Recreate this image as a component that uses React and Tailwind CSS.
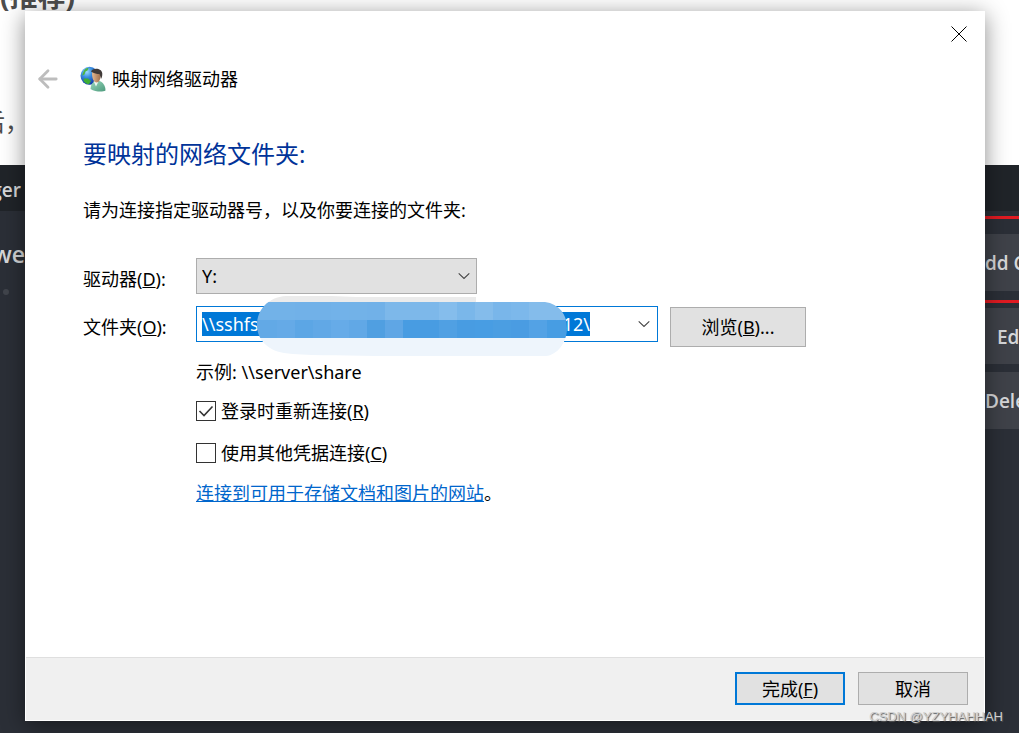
import { useState } from "react";
import { ArrowLeft } from "lucide-react";

const topCells = ["#72b2e8", "#72b2e8", "#71b1e8", "#71b1e8", "#72b2e9", "#72b2e8", "#71b1e8", "#7db8ea", "#7db8ea", "#7db8ea", "#85bdec", "#7ab7ea", "#84bceb", "#79b6ea", "#7cb8eb", "#84bceb", "#84bceb", "#79b6ea"];
const bottomCells = ["#62a9e6", "#65aae7", "#5ca6e5", "#61a8e6", "#66abe8", "#61a8e6", "#509fe1", "#5fa6e5", "#489ce2", "#489ce2", "#50a0e3", "#489ce2", "#489de3", "#4b9ee2", "#4a9ce2", "#53a2e5", "#479de3", "#479de3"];

function Chevron() {
  return (
    <svg
      viewBox="0 0 12 7"
      className="pointer-events-none absolute right-[7px] top-1/2 h-[7px] w-3 -translate-y-1/2"
      fill="none"
      stroke="#444"
      strokeWidth="1.1"
    >
      <path d="M0.7 0.8 6 6 11.3 0.8" />
    </svg>
  );
}

function NetworkUserIcon() {
  return (
    <svg viewBox="0 0 26 26" className="h-[26px] w-[26px]">
      <defs>
        <radialGradient id="globe" cx="35%" cy="28%" r="75%">
          <stop offset="0" stopColor="#9fdcff" />
          <stop offset="0.4" stopColor="#3a8fe0" />
          <stop offset="1" stopColor="#0b2fa0" />
        </radialGradient>
        <linearGradient id="coat" x1="0" y1="0" x2="1" y2="1">
          <stop offset="0" stopColor="#9ad8bd" />
          <stop offset="1" stopColor="#4c9a7c" />
        </linearGradient>
        <linearGradient id="face" x1="0" y1="0" x2="1" y2="0">
          <stop offset="0" stopColor="#e3b891" />
          <stop offset="1" stopColor="#a06f4c" />
        </linearGradient>
      </defs>
      <circle cx="9.5" cy="9.8" r="9" fill="url(#globe)" />
      <path d="M4 4.5C5.500 2.500 7 2 8.500 2l-1 2.500-2 1-1 3L2 9.500z" fill="#4fb53f" />
      <path d="M4 12.500l4 0 3 2.500L9 18.300c-2.500-.3-4-1.500-5.500-3.300z" fill="#3fae35" />
      <path d="M10.500 23c.2-4.500 2-7 5-8h4c3.500 1 6 5 6 9.500-3 1.800-10 1.500-15-1.500z" fill="url(#coat)" />
      <path d="M13.500 15l2.500 5.500 2.500-5z" fill="#eef8f4" />
      <path d="M12 7c0-3 8.300-3 8.500 1 .2 4.500-1 8.500-3.800 8.500-3.200 0-4.700-4.500-4.700-9.500z" fill="url(#face)" />
      <path d="M11 5.500c1-4 11-4.200 11.300 2 .1 2.500-.5 4.500-1.300 5.500-.5-2-.8-3.500-1.500-5-2.500 0-5.500-.3-8.500-2.500z" fill="#403a38" />
    </svg>
  );
}

function Mosaic() {
  return (
    <svg
      viewBox="0 0 312 60"
      className="pointer-events-none absolute -top-[11px] left-[59px] h-[60px] w-[312px]"
      aria-hidden="true"
    >
      <defs>
        <clipPath id="brush">
          <path d="M30 0C50 -2 70 0 100 1L220 1 220 6 289 6C303 8 311 18 311 32 311 47 301 59 290 60L120 60C80 59 50 60 28 57 10 54 1 42 1 29 1 14 12 1 30 0Z" />
        </clipPath>
      </defs>
      <g clipPath="url(#brush)">
        <rect width="220" height="6" fill="#ebebeb" />
        {topCells.map((c, i) => (
          <rect key={i} x={3 + i * 18 - (i ? 0 : 3)} y="6" width={i ? 18 : 21} height="18" fill={c} shapeRendering="crispEdges" />
        ))}
        {bottomCells.map((c, i) => (
          <rect key={i} x={3 + i * 18 - (i ? 0 : 3)} y="24" width={i ? 18 : 21} height="18" fill={c} shapeRendering="crispEdges" />
        ))}
        <rect y="42" width="312" height="18" fill="#eef5fc" />
      </g>
    </svg>
  );
}

function Check({ id, checked, onChange, children }) {
  return (
    <div className="flex h-6 items-center gap-[5px]">
      <span className="relative h-5 w-5">
        <input
          id={id}
          type="checkbox"
          checked={checked}
          onChange={(e) => onChange(e.target.checked)}
          className="block h-5 w-5 appearance-none border border-[#333] bg-white"
        />
        {checked && (
          <svg viewBox="0 0 20 20" className="pointer-events-none absolute inset-0" fill="none" stroke="#333" strokeWidth="1.6">
            <path d="M3.500 10 8 14.500 16.500 5.500" />
          </svg>
        )}
      </span>
      <label htmlFor={id}>{children}</label>
    </div>
  );
}

function Backdrop() {
  return (
    <div className="flex min-h-screen flex-col">
      <div className="h-[165px] overflow-hidden bg-white text-[#4d4d4d]">
        <p className="-mt-[22px] h-9 text-[28px] font-bold leading-9">(推荐)</p>
        <div className="mt-[90px] flex w-[29px] justify-end whitespace-nowrap text-[24px] leading-9">后，</div>
      </div>
      <div className="flex flex-1 justify-between bg-[#2b2f37] font-['Open_Sans',sans-serif] font-semibold text-[#d6d7d9]">
        <div className="w-[25px] overflow-hidden">
          <div className="flex h-[46px] items-center justify-end bg-[#202429] pr-1 pt-1 text-[19px]">ger</div>
          <div className="flex h-[86px] items-center justify-end text-[23px]">we</div>
          <div className="-mt-2 ml-[3px] h-1.5 w-1.5 rounded-full bg-[#41454c]" />
        </div>
        <div className="w-[34px] overflow-hidden whitespace-nowrap text-[19px]">
          <div className="h-[46px] bg-[#202429]" />
          <div className="mt-[5px] h-[3px] bg-[#e11b22]" />
          <div className="mt-[15px] flex h-[57px] items-center bg-[#3f4249] pt-0.5">dd C</div>
          <div className="mt-[9px] h-[3px] bg-[#e11b22]" />
          <div className="mt-[5px] flex h-[56px] items-center bg-[#3f4249] pl-3 pt-0.5">Ed</div>
          <div className="mt-2 flex h-[57px] items-center bg-[#3f4249] pt-0.5">Dele</div>
        </div>
      </div>
    </div>
  );
}

export default function App() {
  const [drive, setDrive] = useState("Y:");
  const [folder, setFolder] = useState("\\\\sshfs");
  const [reconnect, setReconnect] = useState(true);
  const [otherCreds, setOtherCreds] = useState(false);

  return (
    <div className="relative min-h-screen overflow-hidden font-['Noto_Sans','Noto_Sans_CJK_SC',sans-serif]">
      <Backdrop />

      <div className="absolute inset-0 flex pb-3 pl-[25px] pr-[34px] pt-[11px]">
        <main className="flex flex-1 flex-col border border-white bg-white text-[18px] leading-6 text-black shadow-[0_4px_22px_rgba(0,0,0,0.45)]">
          <div className="flex h-11 justify-end">
            <button type="button" aria-label="关闭" className="flex w-[50px] items-center justify-center">
              <svg viewBox="0 0 16 16" className="h-4 w-4" stroke="#000" strokeWidth="1">
                <path d="M0.500 0.500 15.500 15.500M15.500 0.500 0.500 15.500" />
              </svg>
            </button>
          </div>

          <div className="flex h-[46px] items-center pl-2">
            <button type="button" aria-label="返回" className="text-[#bdbdbd]">
              <ArrowLeft size={28} strokeWidth={2.4} />
            </button>
            <span className="ml-[18px]">
              <NetworkUserIcon />
            </span>
            <span className="ml-[6px]">映射网络驱动器</span>
          </div>

          <div className="flex-1 px-[57px]">
            <h1 className="mt-[34px] text-[24px] leading-9 text-[#003399]">要映射的网络文件夹:</h1>
            <p className="mt-[26px]">请为连接指定驱动器号，以及你要连接的文件夹:</p>

            <div className="mt-9 grid grid-cols-[113px_1fr]">
              <label htmlFor="drive" className="mt-[9px]">
                驱动器(<u>D</u>):
              </label>
              <div className="relative h-9 w-[281px]">
                <select
                  id="drive"
                  value={drive}
                  onChange={(e) => setDrive(e.target.value)}
                  className="h-full w-full appearance-none border border-[#adadad] bg-[#e1e1e1] px-[5px]"
                >
                  <option>Y:</option>
                </select>
                <Chevron />
              </div>

              <label htmlFor="folder" className="mt-[21px]">
                文件夹(<u>O</u>):
              </label>
              <div className="mt-3 flex items-start gap-3">
                <div className="relative flex h-9 w-[462px] items-center border border-[#0078d7] bg-white pl-[5px]">
                  <div className="flex h-6 w-[388px] items-center bg-[#0078d7] text-white">
                    <input
                      id="folder"
                      value={folder}
                      onChange={(e) => setFolder(e.target.value)}
                      className="h-6 min-w-0 flex-1 bg-transparent outline-none"
                    />
                    <span>12\</span>
                  </div>
                  <Mosaic />
                  <Chevron />
                </div>
                <button type="button" className="mt-px h-10 w-[136px] border border-[#adadad] bg-[#e1e1e1]">
                  浏览(<u>B</u>)...
                </button>
              </div>

              <div className="col-start-2">
                <p className="mt-[13px]">示例: \\server\share</p>
                <div className="mt-[15px]">
                  <Check id="reconnect" checked={reconnect} onChange={setReconnect}>
                    登录时重新连接(<u>R</u>)
                  </Check>
                </div>
                <div className="mt-[18px]">
                  <Check id="creds" checked={otherCreds} onChange={setOtherCreds}>
                    使用其他凭据连接(<u>C</u>)
                  </Check>
                </div>
                <p className="mt-4">
                  <a href="#" className="text-[#0066cc] underline">
                    连接到可用于存储文档和图片的网站
                  </a>
                  。
                </p>
              </div>
            </div>
          </div>

          <footer className="flex h-[63px] items-start justify-end gap-[13px] border-t border-[#dfdfdf] bg-[#f0f0f0] pr-4 pt-[14px]">
            <button type="button" className="h-[33px] w-[110px] border-2 border-[#0078d7] bg-[#e1e1e1]">
              完成(<u>F</u>)
            </button>
            <button type="button" className="h-[33px] w-[110px] border border-[#adadad] bg-[#e1e1e1]">
              取消
            </button>
          </footer>
        </main>
      </div>

      <p className="pointer-events-none absolute bottom-[6px] right-4 font-['Liberation_Sans',sans-serif] text-[13px] leading-5 text-[#d0d0d0] [text-shadow:1px_1px_1px_#555]">
        CSDN @YZYHAHHAH
      </p>
    </div>
  );
}
